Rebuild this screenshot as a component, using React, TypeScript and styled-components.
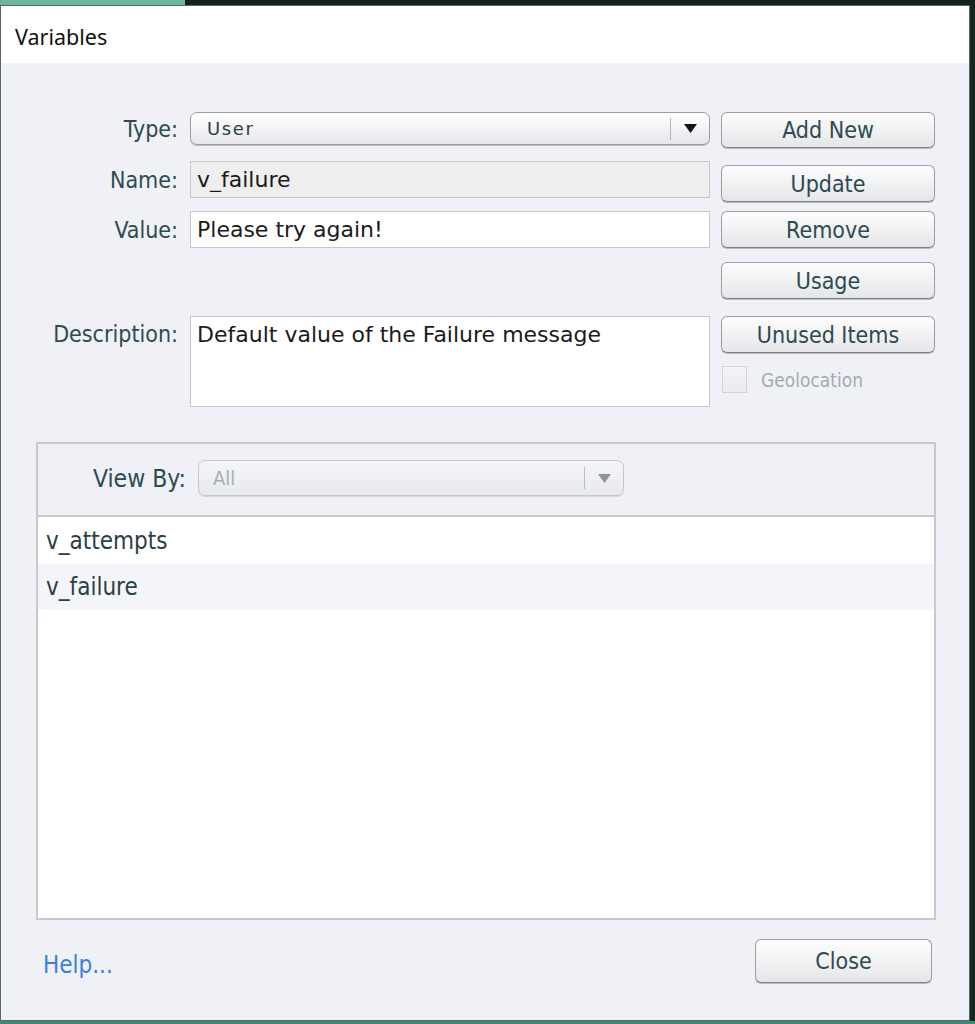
import styled, { createGlobalStyle } from "styled-components";

const GlobalStyle = createGlobalStyle`
  html, body {
    margin: 0;
    padding: 0;
    background: #14271f;
  }
  * {
    box-sizing: border-box;
  }
`;

const uiFont = `"DejaVu Sans Condensed", "DejaVu Sans", sans-serif`;
const fieldFont = `"DejaVu Sans", Verdana, sans-serif`;
const labelColor = "#2e4a51";

const Page = styled.div`
  width: 975px;
  height: 1024px;
  overflow: hidden;
  display: flex;
  flex-direction: column;
`;

const TopStrip = styled.div`
  height: 5px;
  display: flex;
  background: #10221b;
`;

const TopStripBlock = styled.div`
  width: 185px;
  background: #6db799;
`;

const Dialog = styled.div`
  width: 970px;
  height: 1016px;
  border: 1px solid #5d6664;
  background: #eff1f6;
  display: flex;
  flex-direction: column;
`;

const BottomStrip = styled.div`
  flex: 1;
  background: #3e8a72;
`;

const TitleBar = styled.div`
  height: 57px;
  background: #ffffff;
  display: flex;
  align-items: center;
  padding: 3px 0 0 14px;
  font-family: "Noto Sans", "Open Sans", sans-serif;
  font-size: 21.5px;
  color: #111;
  flex-shrink: 0;
`;

const Body = styled.div`
  flex: 1;
  display: flex;
  flex-direction: column;
  padding: 49px 0 0 0;
`;

const FormArea = styled.div`
  display: flex;
`;

const FieldColumn = styled.div`
  display: flex;
  flex-direction: column;
  width: 709px;
`;

const FieldRow = styled.div<{ $mt?: number }>`
  display: flex;
  align-items: flex-start;
  margin-top: ${(p) => p.$mt ?? 0}px;
`;

const Label = styled.div<{ $h: number }>`
  width: 177px;
  height: ${(p) => p.$h}px;
  margin-right: 12px;
  display: flex;
  align-items: center;
  justify-content: flex-end;
  font-family: ${uiFont};
  font-size: 23px;
  color: ${labelColor};
  white-space: nowrap;
`;

const TopLabel = styled(Label)`
  align-items: flex-start;
  padding-top: 5px;
`;

const Dropdown = styled.div<{ $disabled?: boolean; $w: number }>`
  width: ${(p) => p.$w}px;
  height: ${(p) => (p.$disabled ? 36 : 33)}px;
  border: 1px solid ${(p) => (p.$disabled ? "#c4c7cb" : "#9a9da1")};
  border-radius: 7px;
  background: ${(p) =>
    p.$disabled
      ? "linear-gradient(#f5f6f8, #e8e9ec)"
      : "linear-gradient(#ffffff, #e6e7ea)"};
  display: flex;
  align-items: center;
  padding-left: ${(p) => (p.$disabled ? 14 : 16)}px;
  box-shadow: 0 1px 0 ${(p) => (p.$disabled ? "#d3d5d8" : "#b8babd")};
`;

const DropdownText = styled.span<{ $disabled?: boolean }>`
  flex: 1;
  font-family: ${(p) => (p.$disabled ? uiFont : fieldFont)};
  font-size: ${(p) => (p.$disabled ? 20 : 18)}px;
  letter-spacing: ${(p) => (p.$disabled ? 0 : 1.6)}px;
  color: ${(p) => (p.$disabled ? "#a8b0b4" : "#2b4147")};
`;

const DropdownSep = styled.span<{ $disabled?: boolean }>`
  width: 1px;
  height: 22px;
  background: ${(p) => (p.$disabled ? "#b9bcc0" : "#b5b7ba")};
`;

const DropdownArrow = styled.span<{ $disabled?: boolean }>`
  width: 38px;
  display: flex;
  justify-content: center;
  align-items: center;
  svg {
    fill: ${(p) => (p.$disabled ? "#8f9498" : "#151515")};
  }
`;

const TextField = styled.input<{ $readonlyLook?: boolean }>`
  width: 520px;
  height: 37px;
  border: 1px solid #c6c7c9;
  background: ${(p) => (p.$readonlyLook ? "#eeeeee" : "#ffffff")};
  font-family: ${fieldFont};
  font-size: 22px;
  color: #1a1a1a;
  padding: 0 0 0 6px;
  margin: 0;
  outline: none;
`;

const TextArea = styled.textarea`
  width: 520px;
  height: 91px;
  border: 1px solid #c6c7c9;
  background: #ffffff;
  font-family: ${fieldFont};
  font-size: 22px;
  color: #1a1a1a;
  padding: 4px 6px;
  margin: 0;
  resize: none;
  outline: none;
  line-height: 28px;
`;

const ButtonColumn = styled.div`
  display: flex;
  flex-direction: column;
  margin-left: 11px;
  width: 214px;
`;

const Button = styled.button<{ $mt?: number; $h?: number; $w?: number }>`
  width: ${(p) => p.$w ?? 214}px;
  height: ${(p) => p.$h ?? 37}px;
  margin-top: ${(p) => p.$mt ?? 0}px;
  border: 1px solid #9a9da1;
  border-bottom-color: #7f8285;
  border-radius: 6px;
  background: linear-gradient(#fdfdfd, #e5e6e9);
  box-shadow: 0 1px 0 #b9bbbe;
  font-family: ${uiFont};
  font-size: 23px;
  color: ${labelColor};
  padding: 0;
  cursor: default;
`;

const CheckRow = styled.div`
  display: flex;
  align-items: center;
  margin-top: 13px;
  padding-left: 1px;
`;

const CheckBox = styled.span`
  width: 25px;
  height: 27px;
  border: 1px solid #d2d4d7;
  background: linear-gradient(#f3f4f7, #e9ebef);
  margin-right: 14px;
`;

const CheckLabel = styled.span`
  font-family: ${uiFont};
  font-size: 19px;
  color: #a4abb0;
`;

const Panel = styled.div`
  margin: 35px 0 0 35px;
  width: 900px;
  height: 478px;
  border: 2px solid #c7c9cc;
  display: flex;
  flex-direction: column;
`;

const PanelHeader = styled.div`
  height: 71px;
  display: flex;
  align-items: flex-start;
  padding-top: 16px;
`;

const ViewLabel = styled.div`
  width: 148px;
  height: 36px;
  margin-right: 12px;
  display: flex;
  align-items: center;
  justify-content: flex-end;
  font-family: ${uiFont};
  font-size: 24.5px;
  color: ${labelColor};
`;

const List = styled.div`
  flex: 1;
  background: #ffffff;
  border-top: 2px solid #c7c9cc;
  padding-top: 1px;
`;

const ListRow = styled.div<{ $alt?: boolean }>`
  height: 46px;
  display: flex;
  align-items: center;
  padding-left: 8px;
  background: ${(p) => (p.$alt ? "#f4f5f9" : "#ffffff")};
  font-family: ${uiFont};
  font-size: 24px;
  color: #2a4046;
`;

const Footer = styled.div`
  display: flex;
  align-items: center;
  justify-content: space-between;
  margin-top: 19px;
  padding: 0 37px 0 42px;
`;

const HelpLink = styled.a`
  font-family: ${uiFont};
  font-size: 24px;
  color: #3a7fe0;
  text-decoration: none;
  margin-top: 8px;
`;

const Arrow = () => (
  <svg width="13" height="9" viewBox="0 0 13 9">
    <polygon points="0,0 13,0 6.5,9" />
  </svg>
);

const variables = ["v_attempts", "v_failure"];

const App = () => {
  return (
    <>
      <GlobalStyle />
      <Page>
        <TopStrip>
          <TopStripBlock />
        </TopStrip>
        <Dialog>
          <TitleBar>Variables</TitleBar>
          <Body>
            <FormArea>
              <FieldColumn>
                <FieldRow>
                  <Label $h={33}>Type:</Label>
                  <Dropdown $w={520}>
                    <DropdownText>User</DropdownText>
                    <DropdownSep />
                    <DropdownArrow>
                      <Arrow />
                    </DropdownArrow>
                  </Dropdown>
                </FieldRow>
                <FieldRow $mt={16}>
                  <Label $h={37}>Name:</Label>
                  <TextField $readonlyLook readOnly value="v_failure" />
                </FieldRow>
                <FieldRow $mt={13}>
                  <Label $h={37}>Value:</Label>
                  <TextField readOnly value="Please try again!" />
                </FieldRow>
                <FieldRow $mt={68}>
                  <TopLabel $h={91}>Description:</TopLabel>
                  <TextArea readOnly value="Default value of the Failure message" />
                </FieldRow>
              </FieldColumn>
              <ButtonColumn>
                <Button $h={36}>Add New</Button>
                <Button $mt={17}>Update</Button>
                <Button $mt={9}>Remove</Button>
                <Button $mt={14}>Usage</Button>
                <Button $mt={17}>Unused Items</Button>
                <CheckRow>
                  <CheckBox />
                  <CheckLabel>Geolocation</CheckLabel>
                </CheckRow>
              </ButtonColumn>
            </FormArea>
            <Panel>
              <PanelHeader>
                <ViewLabel>View By:</ViewLabel>
                <Dropdown $disabled $w={426}>
                  <DropdownText $disabled>All</DropdownText>
                  <DropdownSep $disabled />
                  <DropdownArrow $disabled>
                    <Arrow />
                  </DropdownArrow>
                </Dropdown>
              </PanelHeader>
              <List>
                {variables.map((v, i) => (
                  <ListRow key={v} $alt={i % 2 === 1}>
                    {v}
                  </ListRow>
                ))}
              </List>
            </Panel>
            <Footer>
              <HelpLink href="#">Help...</HelpLink>
              <Button $h={44} $w={177}>
                Close
              </Button>
            </Footer>
          </Body>
        </Dialog>
        <BottomStrip />
      </Page>
    </>
  );
};

export default App;
